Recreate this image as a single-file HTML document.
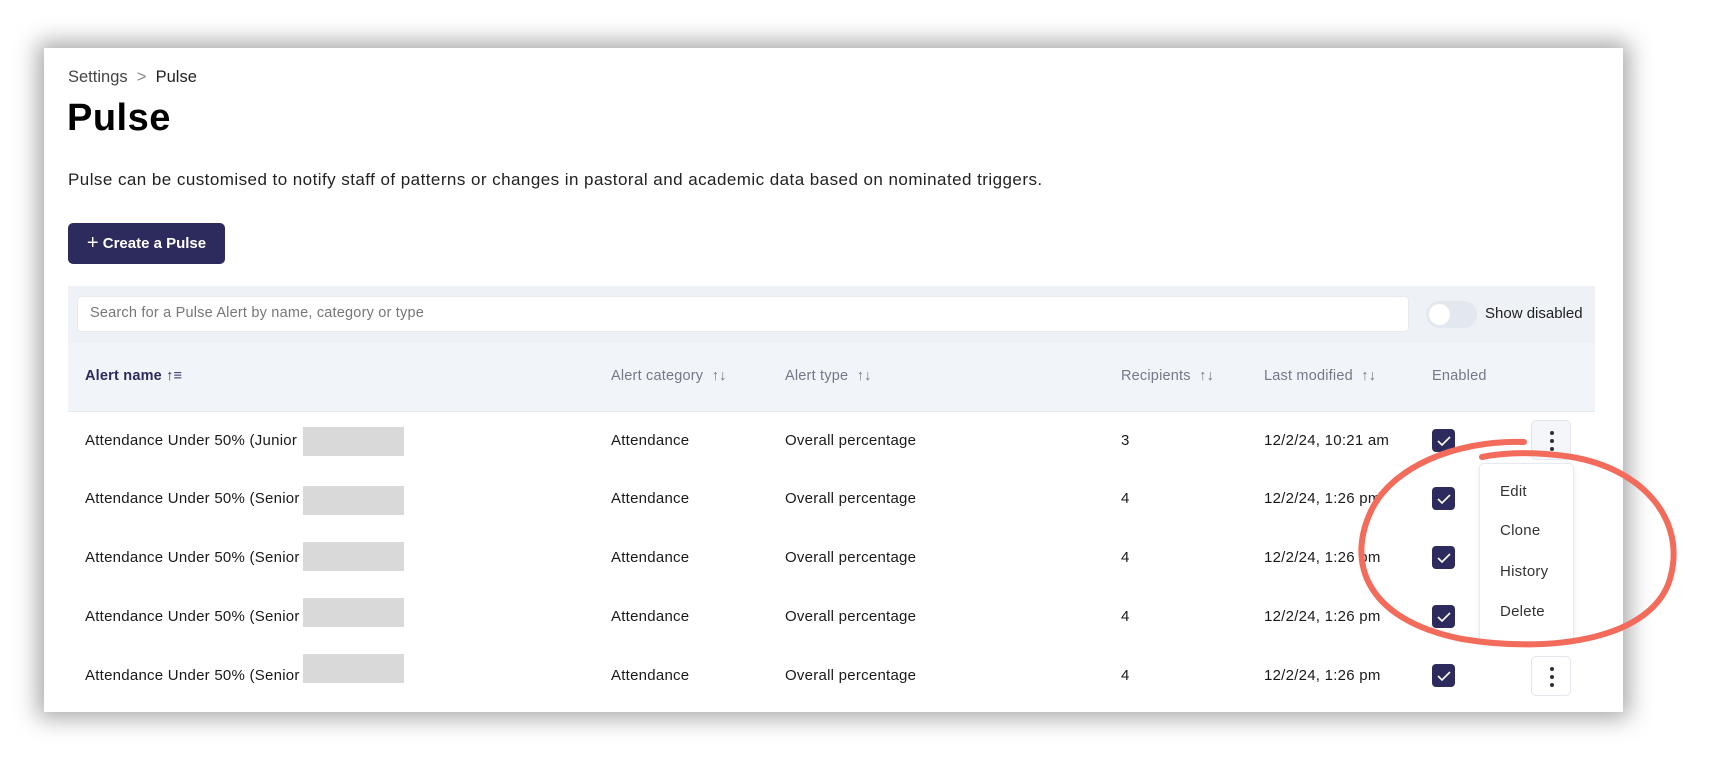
<!DOCTYPE html>
<html><head><style>
body{margin:0;width:1720px;height:769px;background:#fff;position:relative;overflow:hidden;font-family:"Liberation Sans",sans-serif;color:#1a1a1a}
.a{position:absolute}
.panel{left:44px;top:48px;width:1579px;height:664px;background:#fff;box-shadow:0 0 22px 6px rgba(0,0,0,.35)}
.t{font-size:15px;white-space:nowrap;letter-spacing:.25px}
.h{font-size:14.5px;color:#77778a;white-space:nowrap;letter-spacing:.2px}
.gray{width:101px;height:29px;background:#d9d9d9}
.kb{width:40px;height:40px;border:1px solid #e3e6ec;border-radius:5px;background:#fff;box-sizing:border-box}
.dot{position:absolute;left:18px;width:4px;height:4px;border-radius:2px;background:#333}
</style></head><body>
<div class="a panel"></div>
<div class="a" style="left:68px;top:68px;font-size:16.5px;color:#444">Settings&nbsp;&nbsp;<span style="color:#888">&gt;</span>&nbsp;&nbsp;<span style="color:#222">Pulse</span></div>
<div class="a" style="left:67px;top:97px;font-size:38px;font-weight:bold;color:#000;letter-spacing:.5px">Pulse</div>
<div class="a" style="left:68px;top:170px;font-size:17px;color:#222;letter-spacing:.45px">Pulse can be customised to notify staff of patterns or changes in pastoral and academic data based on nominated triggers.</div>
<div class="a" style="left:68px;top:223px;width:157px;height:41px;background:#2d2a5e;border-radius:5px;color:#fff;font-size:15px;font-weight:bold;line-height:41px;text-align:center"><span style="font-size:20px;font-weight:normal;vertical-align:-1px">+</span> Create a Pulse</div>
<div class="a" style="left:68px;top:286px;width:1527px;height:57px;background:#eef2f7"></div>
<div class="a" style="left:77px;top:296px;width:1332px;height:36px;background:#fff;border-radius:4px;border:1px solid #e6e9ee;box-sizing:border-box"></div>
<div class="a" style="left:90px;top:305px;font-size:14.5px;color:#777;letter-spacing:.2px">Search for a Pulse Alert by name, category or type</div>
<div class="a" style="left:1426px;top:301px;width:51px;height:27px;background:#e3e7ee;border-radius:14px"><div class="a" style="left:3px;top:3px;width:21px;height:21px;border-radius:11px;background:#fff"></div></div>
<div class="a" style="left:1485px;top:305px;font-size:15px;color:#222">Show disabled</div>
<div class="a" style="left:68px;top:343px;width:1527px;height:68px;background:#f1f4f9;border-bottom:1px solid #e6e9ee"></div>
<div class="a h" style="left:85px;top:368px;color:#2d2a5e;font-weight:bold">Alert name <span style="font-weight:normal">↑≡</span></div>
<div class="a h" style="left:611px;top:368px">Alert category &nbsp;↑↓</div>
<div class="a h" style="left:785px;top:368px">Alert type &nbsp;↑↓</div>
<div class="a h" style="left:1121px;top:368px">Recipients &nbsp;↑↓</div>
<div class="a h" style="left:1264px;top:368px">Last modified &nbsp;↑↓</div>
<div class="a h" style="left:1432px;top:368px">Enabled</div>

<div class="a t" style="left:85px;top:432px">Attendance Under 50% (Junior</div>
<div class="a gray" style="left:303px;top:427px"></div>
<div class="a t" style="left:611px;top:432px">Attendance</div><div class="a t" style="left:785px;top:432px">Overall percentage</div><div class="a t" style="left:1121px;top:432px">3</div><div class="a t" style="left:1264px;top:432px">12/2/24, 10:21 am</div>
<div class="a t" style="left:85px;top:490px">Attendance Under 50% (Senior</div>
<div class="a gray" style="left:303px;top:486px"></div>
<div class="a t" style="left:611px;top:490px">Attendance</div><div class="a t" style="left:785px;top:490px">Overall percentage</div><div class="a t" style="left:1121px;top:490px">4</div><div class="a t" style="left:1264px;top:490px">12/2/24, 1:26 pm</div>
<div class="a t" style="left:85px;top:549px">Attendance Under 50% (Senior</div>
<div class="a gray" style="left:303px;top:542px"></div>
<div class="a t" style="left:611px;top:549px">Attendance</div><div class="a t" style="left:785px;top:549px">Overall percentage</div><div class="a t" style="left:1121px;top:549px">4</div><div class="a t" style="left:1264px;top:549px">12/2/24, 1:26 pm</div>
<div class="a t" style="left:85px;top:608px">Attendance Under 50% (Senior</div>
<div class="a gray" style="left:303px;top:598px"></div>
<div class="a t" style="left:611px;top:608px">Attendance</div><div class="a t" style="left:785px;top:608px">Overall percentage</div><div class="a t" style="left:1121px;top:608px">4</div><div class="a t" style="left:1264px;top:608px">12/2/24, 1:26 pm</div>
<div class="a t" style="left:85px;top:667px">Attendance Under 50% (Senior</div>
<div class="a gray" style="left:303px;top:654px"></div>
<div class="a t" style="left:611px;top:667px">Attendance</div><div class="a t" style="left:785px;top:667px">Overall percentage</div><div class="a t" style="left:1121px;top:667px">4</div><div class="a t" style="left:1264px;top:667px">12/2/24, 1:26 pm</div>

<svg class="a" style="left:0;top:0" width="1720" height="769">
<g fill="#2d2a5e"><rect x="1432" y="429" width="23" height="23" rx="4"/><rect x="1432" y="487" width="23" height="23" rx="4"/><rect x="1432" y="546" width="23" height="23" rx="4"/><rect x="1432" y="605" width="23" height="23" rx="4"/><rect x="1432" y="664" width="23" height="23" rx="4"/></g>
<g fill="none" stroke="#fff" stroke-width="1.6"><path d="M1438 441l4 4 8-8"/><path d="M1438 499l4 4 8-8"/><path d="M1438 558l4 4 8-8"/><path d="M1438 617l4 4 8-8"/><path d="M1438 676l4 4 8-8"/></g>
</svg>
<div class="a kb" style="left:1531px;top:420px;background:#f4f6f9"><div class="dot" style="top:10px"></div><div class="dot" style="top:18px"></div><div class="dot" style="top:26px"></div></div>
<div class="a kb" style="left:1531px;top:656px"><div class="dot" style="top:10px"></div><div class="dot" style="top:18px"></div><div class="dot" style="top:26px"></div></div>
<div class="a" style="left:1479px;top:463px;width:93px;height:177px;background:#fff;border:1px solid #e6e9ee;border-radius:5px;box-shadow:0 2px 6px rgba(0,0,0,.08)"></div>
<div class="a t" style="left:1500px;top:483px;color:#333">Edit</div>
<div class="a t" style="left:1500px;top:522px;color:#333">Clone</div>
<div class="a t" style="left:1500px;top:563px;color:#333">History</div>
<div class="a t" style="left:1500px;top:603px;color:#333">Delete</div>
<svg class="a" style="left:0;top:0" width="1720" height="769">
<path d="M1524 442 C1452 440 1392 469 1372 509 C1347 559 1362 619 1462 639 C1552 654 1652 639 1670 579 C1687 519 1642 469 1572 457 C1532 451 1502 453 1482 457" fill="none" stroke="#f26b5b" stroke-width="6" stroke-linecap="round"/>
</svg>
</body></html>
